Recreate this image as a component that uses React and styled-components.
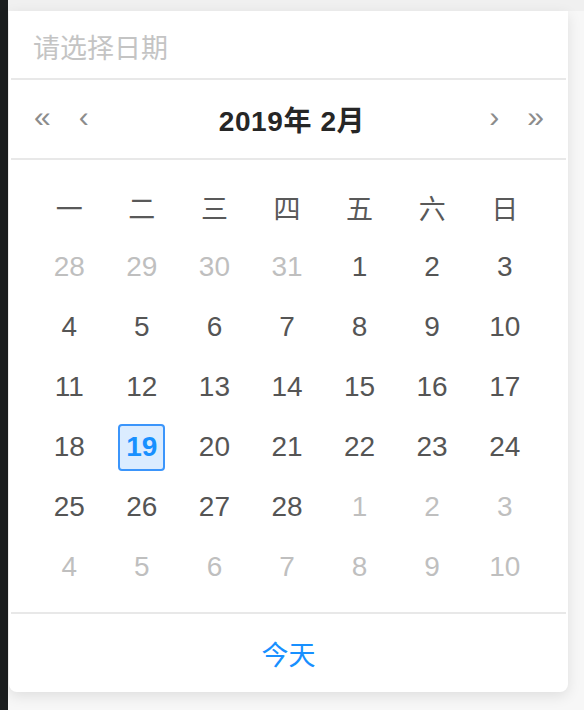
import React from 'react';
import styled, { createGlobalStyle, css } from 'styled-components';

const GlobalStyle = createGlobalStyle`
  html, body {
    margin: 0;
    padding: 0;
    background: #f6f6f6;
  }
  body {
    font-family: "Liberation Sans", "Noto Sans CJK SC", sans-serif;
  }
`;

const Page = styled.div`
  display: flex;
  width: 584px;
  height: 710px;
  overflow: hidden;
  background: linear-gradient(#f0f0f0 0, #f0f0f0 11px, #f7f7f7 11px);
`;

const Strip = styled.div`
  width: 8px;
  flex: none;
  background: #1b1e1f;
`;

const Area = styled.div`
  padding: 11px 0 0 1px;
`;

const Card = styled.div`
  width: 559px;
  background: #fff;
  border-radius: 0 0 8px 8px;
  box-shadow: 0 4px 14px rgba(0, 0, 0, 0.1);
`;

const InputRow = styled.div`
  height: 67px;
  display: flex;
  align-items: center;
  padding: 3px 0 0 24px;
  box-sizing: border-box;
  font-size: 27px;
  color: #c4c4c4;
`;

const Line = styled.div`
  height: 2px;
  margin: 0 2px;
  background: #e8e8e8;
`;

const Nav = styled.div`
  height: 78px;
  display: flex;
  align-items: center;
  padding: 0 24px 0 25px;
`;

const Arrow = styled.span`
  font-size: 30px;
  color: #8c8c8c;
  line-height: 1;
  padding-bottom: 4px;
  ${props => props.gap && css`
    margin-left: ${props.gap}px;
  `}
`;

const Title = styled.div`
  flex: 1;
  text-align: center;
  font-size: 28px;
  font-weight: 600;
  letter-spacing: 0.6px;
  color: #262626;
  padding-left: 6px;
`;

const Body = styled.div`
  padding: 17px 27px 15px 24px;
`;

const Grid = styled.div`
  display: grid;
  grid-template-columns: repeat(7, 1fr);
  grid-auto-rows: 60px;
`;

const Cell = styled.div`
  display: flex;
  align-items: center;
  justify-content: center;
  font-size: 28px;
  color: ${props => (props.muted ? '#bfbfbf' : '#555')};
`;

const Week = styled(Cell)`
  font-size: 27px;
  color: #595959;
`;

const Day = styled.span`
  display: flex;
  align-items: center;
  justify-content: center;
  width: 47px;
  height: 47px;
  box-sizing: border-box;
  ${props => props.selected && css`
    border: 2px solid #3b95fb;
    border-radius: 4px;
    background: #dbecff;
    color: #1890ff;
    font-weight: bold;
  `}
`;

const Footer = styled.div`
  height: 78px;
  display: flex;
  align-items: center;
  justify-content: center;
  font-size: 27px;
  color: #1890ff;
`;

const weekdays = ['一', '二', '三', '四', '五', '六', '日'];

const days = [
  ...[28, 29, 30, 31].map(d => ({ d, muted: true })),
  ...Array.from({ length: 28 }, (_, i) => ({ d: i + 1 })),
  ...Array.from({ length: 10 }, (_, i) => ({ d: i + 1, muted: true })),
];

export default function App() {
  return (
    <Page>
      <GlobalStyle />
      <Strip />
      <Area>
        <Card>
          <InputRow>请选择日期</InputRow>
          <Line />
          <Nav>
            <Arrow>«</Arrow>
            <Arrow gap={28}>‹</Arrow>
            <Title>2019年 2月</Title>
            <Arrow>›</Arrow>
            <Arrow gap={28}>»</Arrow>
          </Nav>
          <Line />
          <Body>
            <Grid>
              {weekdays.map(w => (
                <Week key={w}>{w}</Week>
              ))}
              {days.map((item, i) => (
                <Cell key={i} muted={item.muted}>
                  <Day selected={!item.muted && item.d === 19}>{item.d}</Day>
                </Cell>
              ))}
            </Grid>
          </Body>
          <Line />
          <Footer>今天</Footer>
        </Card>
      </Area>
    </Page>
  );
}
